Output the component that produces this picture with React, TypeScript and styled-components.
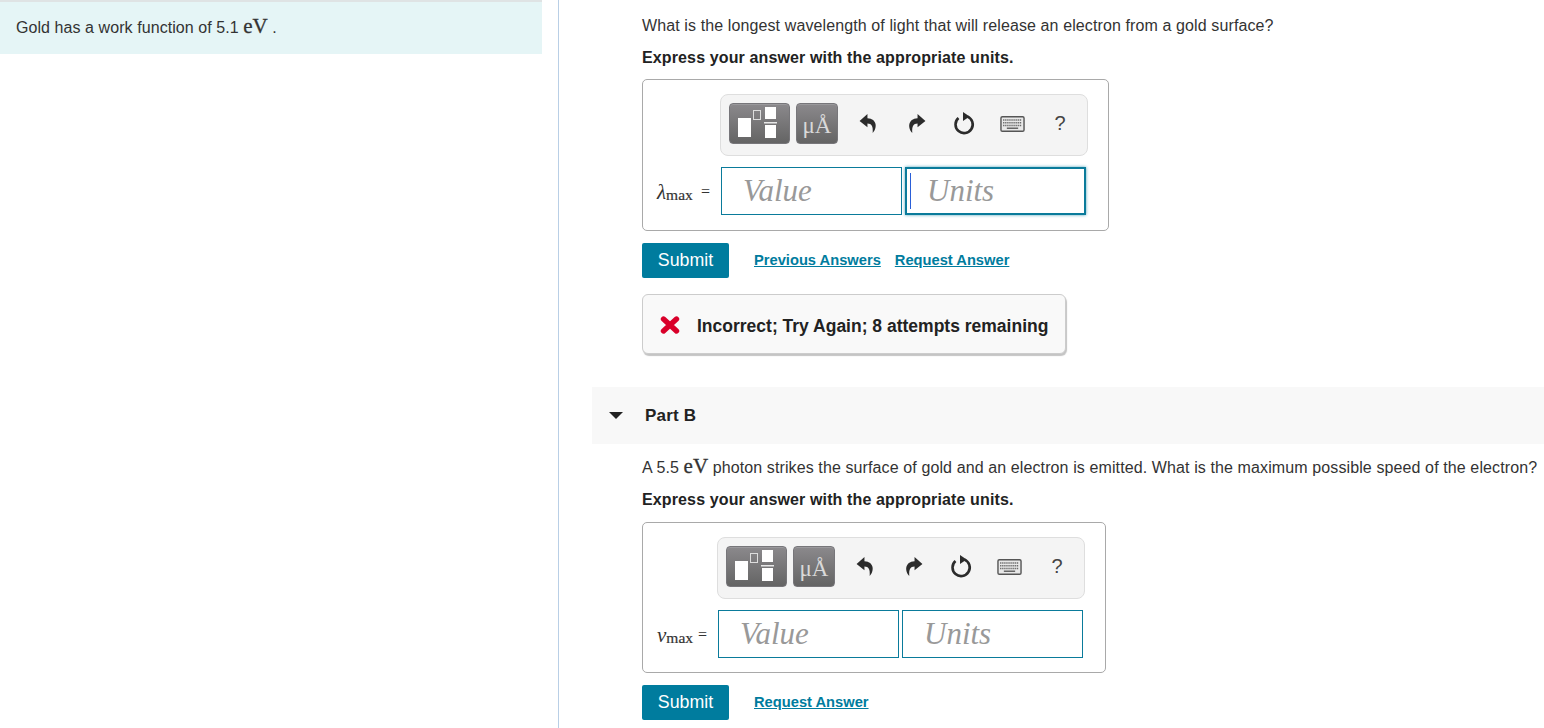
import React from "react";
import styled, { createGlobalStyle } from "styled-components";

const Global = createGlobalStyle`
  html, body { margin: 0; padding: 0; height: 728px; overflow: hidden; background: #fff; }
  body { font-family: "Liberation Sans", Arial, sans-serif; color: #333; font-size: 16px; }
`;

const Page = styled.div`
  display: flex;
  height: 728px;
  overflow: hidden;
`;
const LeftColumn = styled.aside`
  flex: 0 0 558px;
  width: 558px;
`;
const Banner = styled.div`
  width: 542px;
  height: 54px;
  box-sizing: border-box;
  background: #e5f5f6;
  border-top: 2px solid #dfe3e4;
  padding: 0 16px 3px;
  display: flex;
  align-items: center;
  font-size: 16px;
  letter-spacing: 0.07px;
  color: #333;
`;
const RightColumn = styled.main`
  flex: 1;
  min-width: 0;
  border-left: 1px solid #b9cfe6;
  padding: 14px 0 0 33px;
`;
const Indent = styled.div`
  padding-left: 50px;
`;
const Paragraph = styled.p`
  margin: 0 0 8px;
  font-size: 16px;
  line-height: 24px;
  letter-spacing: 0.11px;
  white-space: nowrap;
  color: #333;
`;
const Strong = styled(Paragraph)`
  font-weight: bold;
  color: #222;
  letter-spacing: 0.13px;
  margin-bottom: 9px;
`;
const Math = styled.span`
  font-family: "Liberation Serif", serif;
  font-size: 21px;
  line-height: 1;
  letter-spacing: 0;
  color: #333;
  -webkit-text-stroke: 0.3px #333;
`;
const Panel = styled.div<{ $width: number; $bottom: number }>`
  width: ${(p) => p.$width}px;
  box-sizing: border-box;
  border: 1px solid #a9a9a9;
  border-radius: 5px;
  padding: 14px 0 ${(p) => p.$bottom}px 14px;
  display: grid;
  grid-template-columns: auto 1fr;
  column-gap: 11px;
  row-gap: 11px;
  background: #fff;
`;
const Toolbar = styled.div`
  grid-column: 2;
  width: 368px;
  height: 62px;
  margin-left: -1px;
  box-sizing: border-box;
  background: #f4f4f4;
  border: 1px solid #dedede;
  border-radius: 8px;
  padding: 8px 0 0 8px;
  display: flex;
  align-items: flex-start;
`;
const ToolButton = styled.div<{ $width: number }>`
  width: ${(p) => p.$width}px;
  height: 41px;
  box-sizing: border-box;
  margin-right: 6px;
  border-radius: 4px;
  border: 1px solid #77767a;
  box-shadow: inset 0 1px 0 #9a999c;
  background: linear-gradient(#8b898c, #646464);
  display: flex;
  align-items: center;
  justify-content: center;
  font-family: "Liberation Serif", serif;
  font-size: 23px;
  color: #d9d9d9;
  padding-top: 5px;
`;
const TemplateButton = styled(ToolButton)`
  padding: 0;
`;
const IconSlot = styled.div`
  width: 48px;
  height: 41px;
  display: flex;
  align-items: center;
  justify-content: center;
  font-size: 20px;
  color: #444;
`;
const Label = styled.div<{ $width: number }>`
  width: ${(p) => p.$width}px;
  font-family: "Liberation Serif", serif;
  font-size: 21px;
  color: #333;
  display: flex;
  align-items: center;
  white-space: nowrap;
  padding-top: 2px;
`;
const Symbol = styled.i`
  font-style: italic;
`;
const Sub = styled.span`
  font-size: 15.5px;
  position: relative;
  top: 3px;
  -webkit-text-stroke: 0.2px #333;
`;
const Equals = styled.span`
  font-size: 16px;
  margin-left: auto;
`;
const Fields = styled.div`
  display: flex;
  gap: 3px;
`;
const Field = styled.div<{ $focused?: boolean }>`
  position: relative;
  width: 181px;
  height: 48px;
  box-sizing: border-box;
  border: ${(p) => (p.$focused ? "2px solid #0a7b9b" : "1px solid #0a7b9b")};
  box-shadow: ${(p) => (p.$focused ? "0 0 3px #4fa3bb" : "none")};
  padding-left: ${(p) => (p.$focused ? "20px" : "21px")};
  display: flex;
  align-items: center;
  font-family: "Liberation Serif", serif;
  font-style: italic;
  font-size: 31px;
  color: #999;
  background: #fff;
`;
const Caret = styled.span`
  position: absolute;
  left: 3px;
  top: 4px;
  width: 1px;
  height: 36px;
  background: #2a5fd8;
`;
const Actions = styled.div`
  display: flex;
  align-items: center;
  margin-top: 12px;
`;
const SubmitButton = styled.button`
  width: 87px;
  height: 35px;
  border: 0;
  border-radius: 2px;
  background: #007c9e;
  color: #fff;
  font-family: inherit;
  font-size: 17.8px;
  padding: 0;
  margin-right: 25px;
`;
const ActionLink = styled.a`
  color: #007c9e;
  font-weight: bold;
  font-size: 14.7px;
  text-decoration: underline;
  margin: 0 14px 2px 0;
`;
const Feedback = styled.div`
  width: 424px;
  height: 60px;
  box-sizing: border-box;
  margin-top: 16px;
  background: #f9f9f9;
  border: 1px solid #ccc;
  border-radius: 6px;
  box-shadow: 1px 2px 1px #c4c4c4;
  display: flex;
  align-items: center;
  padding: 5px 0 0 17px;
  gap: 17px;
  font-size: 17.5px;
  font-weight: bold;
  color: #222;
  white-space: nowrap;
`;
const CrossMark = styled.svg`
  margin-bottom: 3px;
`;
const PartHeader = styled.div`
  margin-top: 33px;
  height: 57px;
  background: #f8f8f8;
  display: flex;
  align-items: center;
  padding-left: 17px;
  gap: 22px;
  font-weight: bold;
  font-size: 17px;
  letter-spacing: 0.2px;
  color: #222;
`;
const PartBody = styled(Indent)`
  padding-top: 12px;
`;
const Tight = styled(Strong)`
  margin-bottom: 10px;
`;

const UndoIcon = ({ flip }: { flip?: boolean }) => (
  <svg width="19" height="21" viewBox="0 0 18 20" style={flip ? { transform: "scaleX(-1)" } : undefined}>
    <path d="M8 1 L0.5 7.5 L8 13.5 V10 C12 10 13.5 12.5 13 19 C17.5 14.5 17.5 5.5 8 5 Z" fill="#2b2b2b" />
  </svg>
);
const ResetIcon = () => (
  <svg width="24" height="24" viewBox="0 0 24 24">
    <path d="M6.5 6 A8.6 8.6 0 1 0 15.5 4.6" fill="none" stroke="#2b2b2b" strokeWidth="2.6" />
    <path d="M11 0 L17.6 4.6 L11 9 Z" fill="#2b2b2b" />
  </svg>
);
const KeyboardIcon = () => (
  <svg width="25" height="16" viewBox="0 0 26 17">
    <rect x="0.75" y="0.75" width="24.5" height="15.5" rx="1.5" fill="#e8e8e8" stroke="#555" strokeWidth="1.5" />
    <path d="M3 4.2H23M3 7.2H23M3 10.2H23" stroke="#666" strokeWidth="1.6" strokeDasharray="1.4 0.8" />
    <path d="M7 13H19" stroke="#666" strokeWidth="1.6" />
  </svg>
);
const TemplateIcon = () => (
  <svg width="59" height="39" viewBox="0 0 59 39">
    <rect x="8" y="14" width="13" height="19" fill="#fff" />
    <rect x="23.5" y="6.5" width="7" height="9" fill="none" stroke="#ddd" />
    <rect x="35" y="3" width="11" height="12" fill="#fff" />
    <rect x="34" y="18" width="13" height="1.5" fill="#e8e8e8" />
    <rect x="35" y="21" width="11" height="13" fill="#fff" />
  </svg>
);
const CrossIcon = () => (
  <CrossMark width="20" height="18" viewBox="0 0 20 18">
    <path d="M3.5 3 L16.5 15 M16.5 3 L3.5 15" stroke="#d9002a" strokeWidth="5.4" strokeLinecap="round" />
  </CrossMark>
);
const Triangle = () => (
  <svg width="14" height="7" viewBox="0 0 14 7">
    <path d="M0 0H14L7 7Z" fill="#222" />
  </svg>
);

const Tools = () => (
  <Toolbar>
    <TemplateButton $width={61}>
      <TemplateIcon />
    </TemplateButton>
    <ToolButton $width={42}>μÅ</ToolButton>
    <IconSlot><UndoIcon /></IconSlot>
    <IconSlot><UndoIcon flip /></IconSlot>
    <IconSlot><ResetIcon /></IconSlot>
    <IconSlot><KeyboardIcon /></IconSlot>
    <IconSlot>?</IconSlot>
  </Toolbar>
);

export default function App() {
  return (
    <Page>
      <Global />
      <LeftColumn>
        <Banner>
          <span>
            Gold has a work function of 5.1 <Math>eV</Math> .
          </span>
        </Banner>
      </LeftColumn>
      <RightColumn>
        <Indent>
          <Paragraph>What is the longest wavelength of light that will release an electron from a gold surface?</Paragraph>
          <Strong>Express your answer with the appropriate units.</Strong>
          <Panel $width={467} $bottom={15}>
            <Tools />
            <Label $width={53}>
              <Symbol>λ</Symbol>
              <Sub>max</Sub>
              <Equals>=</Equals>
            </Label>
            <Fields>
              <Field>Value</Field>
              <Field $focused>
                <Caret />
                Units
              </Field>
            </Fields>
          </Panel>
          <Actions>
            <SubmitButton>Submit</SubmitButton>
            <ActionLink href="#">Previous Answers</ActionLink>
            <ActionLink href="#">Request Answer</ActionLink>
          </Actions>
          <Feedback>
            <CrossIcon />
            Incorrect; Try Again; 8 attempts remaining
          </Feedback>
        </Indent>
        <PartHeader>
          <Triangle />
          Part B
        </PartHeader>
        <PartBody>
          <Paragraph>
            A 5.5 <Math>eV</Math> photon strikes the surface of gold and an electron is emitted. What is the maximum possible speed of the electron?
          </Paragraph>
          <Tight>Express your answer with the appropriate units.</Tight>
          <Panel $width={464} $bottom={14}>
            <Tools />
            <Label $width={50}>
              <Symbol>v</Symbol>
              <Sub>max</Sub>
              <Equals>=</Equals>
            </Label>
            <Fields>
              <Field>Value</Field>
              <Field>Units</Field>
            </Fields>
          </Panel>
          <Actions>
            <SubmitButton>Submit</SubmitButton>
            <ActionLink href="#">Request Answer</ActionLink>
          </Actions>
        </PartBody>
      </RightColumn>
    </Page>
  );
}
